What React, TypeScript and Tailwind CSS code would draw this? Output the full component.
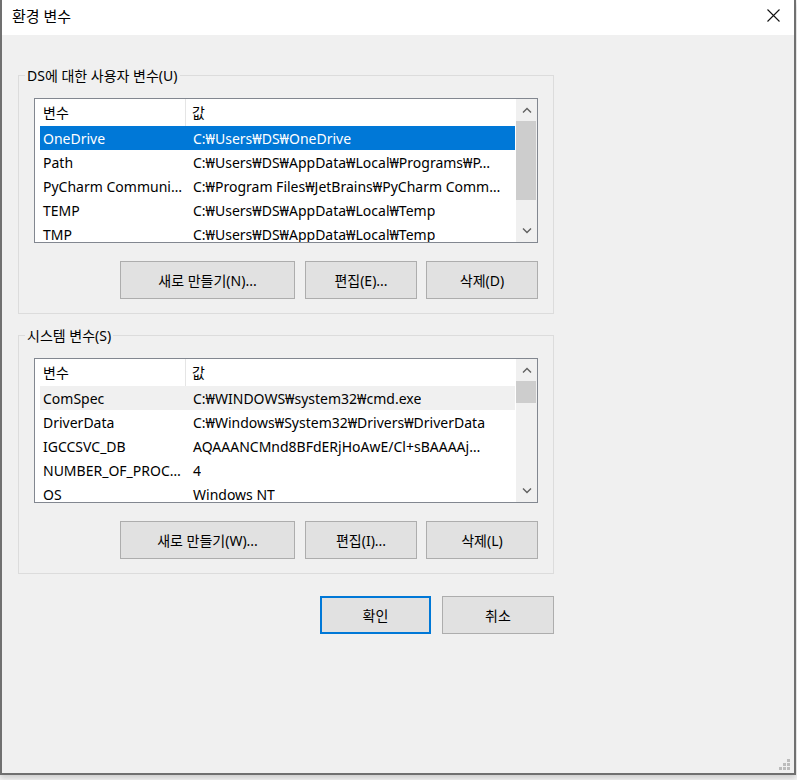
import React from "react";

const font = { fontFamily: '"Noto Sans", "Noto Sans CJK KR", sans-serif' };

type Row = [string, string];

const userRows: Row[] = [
  ["OneDrive", "C:₩Users₩DS₩OneDrive"],
  ["Path", "C:₩Users₩DS₩AppData₩Local₩Programs₩P…"],
  ["PyCharm Communi…", "C:₩Program Files₩JetBrains₩PyCharm Comm…"],
  ["TEMP", "C:₩Users₩DS₩AppData₩Local₩Temp"],
  ["TMP", "C:₩Users₩DS₩AppData₩Local₩Temp"],
];

const systemRows: Row[] = [
  ["ComSpec", "C:₩WINDOWS₩system32₩cmd.exe"],
  ["DriverData", "C:₩Windows₩System32₩Drivers₩DriverData"],
  ["IGCCSVC_DB", "AQAAANCMnd8BFdERjHoAwE/Cl+sBAAAAj…"],
  ["NUMBER_OF_PROC…", "4"],
  ["OS", "Windows NT"],
];

const Chevron = ({ up }: { up?: boolean }) => (
  <svg width="10" height="6" viewBox="0 0 10 6" className="block">
    <path
      d={up ? "M1 5.5 L5 1.5 L9 5.5" : "M1 0.5 L5 4.5 L9 0.5"}
      fill="none"
      stroke="#606060"
      strokeWidth="1.4"
    />
  </svg>
);

const VarList = ({
  rows,
  active,
  thumb,
}: {
  rows: Row[];
  active: boolean;
  thumb: string;
}) => (
  <div className="flex h-[145px] w-[504px] border border-[#828790] bg-white overflow-hidden">
    <div className="flex-1 min-w-0 pl-[5px]">
      <div className="flex h-[27px] items-center">
        <div className="w-[146px] h-full flex items-center pl-[3px] border-r border-[#e5e5e5]">변수</div>
        <div className="pl-[6px]">값</div>
      </div>
      {rows.map(([name, value], i) => (
        <div
          key={name}
          className={
            i === 0
              ? active
                ? "flex h-[24px] items-center bg-[#0078d7] text-white"
                : "flex h-[24px] items-center bg-[#f0f0f0]"
              : "flex h-[24px] items-center"
          }
        >
          <div className="w-[147px] shrink-0 pl-[3px] whitespace-nowrap overflow-hidden">{name}</div>
          <div className="pl-[6px] whitespace-nowrap overflow-hidden">{value}</div>
        </div>
      ))}
    </div>
    <div className="w-[21px] ml-[1px] flex flex-col bg-[#f0f0f0]">
      <div className="h-[22px] flex items-center justify-center">
        <Chevron up />
      </div>
      <div className={`${thumb} w-[20px] bg-[#cdcdcd]`} />
      <div className="flex-1" />
      <div className="h-[22px] flex items-center justify-center">
        <Chevron />
      </div>
    </div>
  </div>
);

const Btn = ({ children, w, focused }: { children: React.ReactNode; w: string; focused?: boolean }) => (
  <div
    className={`${w} h-[38px] flex items-center justify-center bg-[#e1e1e1] text-black ${
      focused ? "border-2 border-[#0078d7]" : "border border-[#adadad]"
    }`}
  >
    {children}
  </div>
);

const Group = ({
  label,
  rows,
  active,
  thumb,
  keys,
}: {
  label: string;
  rows: Row[];
  active: boolean;
  thumb: string;
  keys: [string, string, string];
}) => (
  <div className="w-[536px] border border-[#dcdcdc] px-[15px] pb-[14px]">
    <div className="-mt-[10px] -ml-[9px] w-fit px-[2px] bg-[#f0f0f0] leading-[20px]">{label}</div>
    <div className="mt-[12px]">
      <VarList rows={rows} active={active} thumb={thumb} />
    </div>
    <div className="mt-[18px] flex justify-end">
      <Btn w="w-[175px]">새로 만들기({keys[0]})...</Btn>
      <div className="ml-[10px]">
        <Btn w="w-[112px]">편집({keys[1]})...</Btn>
      </div>
      <div className="ml-[9px]">
        <Btn w="w-[112px]">삭제({keys[2]})</Btn>
      </div>
    </div>
  </div>
);

export default function App() {
  return (
    <div className="w-[797px] h-[780px] bg-[#f6f6f6] overflow-hidden text-[14px] text-black" style={font}>
      <div className="w-[796px] h-[775px] flex flex-col border-x-2 border-b-2 border-[#707070] shadow-[0_3px_6px_rgba(0,0,0,0.18)]">
        <div className="h-[35px] bg-white flex items-center justify-between pl-[10px] pr-[14px]">
          <span className="text-[15px] -mt-[3px]">환경 변수</span>
          <svg width="13" height="13" viewBox="0 0 13 13" className="-mt-[4px]">
            <path d="M0.5 0.5 L12.5 12.5 M12.5 0.5 L0.5 12.5" stroke="#111" strokeWidth="1.1" />
          </svg>
        </div>
        <div className="flex-1 bg-[#f0f0f0] pl-[16px] pt-[40px] flex flex-col">
          <Group
            label="DS에 대한 사용자 변수(U)"
            rows={userRows}
            active
            thumb="h-[79px]"
            keys={["N", "E", "D"]}
          />
          <div className="mt-[21px]">
            <Group
              label="시스템 변수(S)"
              rows={systemRows}
              active={false}
              thumb="h-[22px]"
              keys={["W", "I", "L"]}
            />
          </div>
          <div className="w-[536px] mt-[22px] flex justify-end">
            <Btn w="w-[111px]" focused>
              확인
            </Btn>
            <div className="ml-[11px]">
              <Btn w="w-[112px]">취소</Btn>
            </div>
          </div>
          <div className="flex-1" />
          <div className="flex justify-end pr-[4px] pb-[3px]">
            <svg width="11" height="11" viewBox="0 0 11 11">
              <rect x="8" y="0" width="3" height="3" fill="#bcbcbc" />
              <rect x="4" y="4" width="3" height="3" fill="#bcbcbc" />
              <rect x="8" y="4" width="3" height="3" fill="#bcbcbc" />
              <rect x="0" y="8" width="3" height="3" fill="#bcbcbc" />
              <rect x="4" y="8" width="3" height="3" fill="#bcbcbc" />
              <rect x="8" y="8" width="3" height="3" fill="#bcbcbc" />
            </svg>
          </div>
        </div>
      </div>
    </div>
  );
}
